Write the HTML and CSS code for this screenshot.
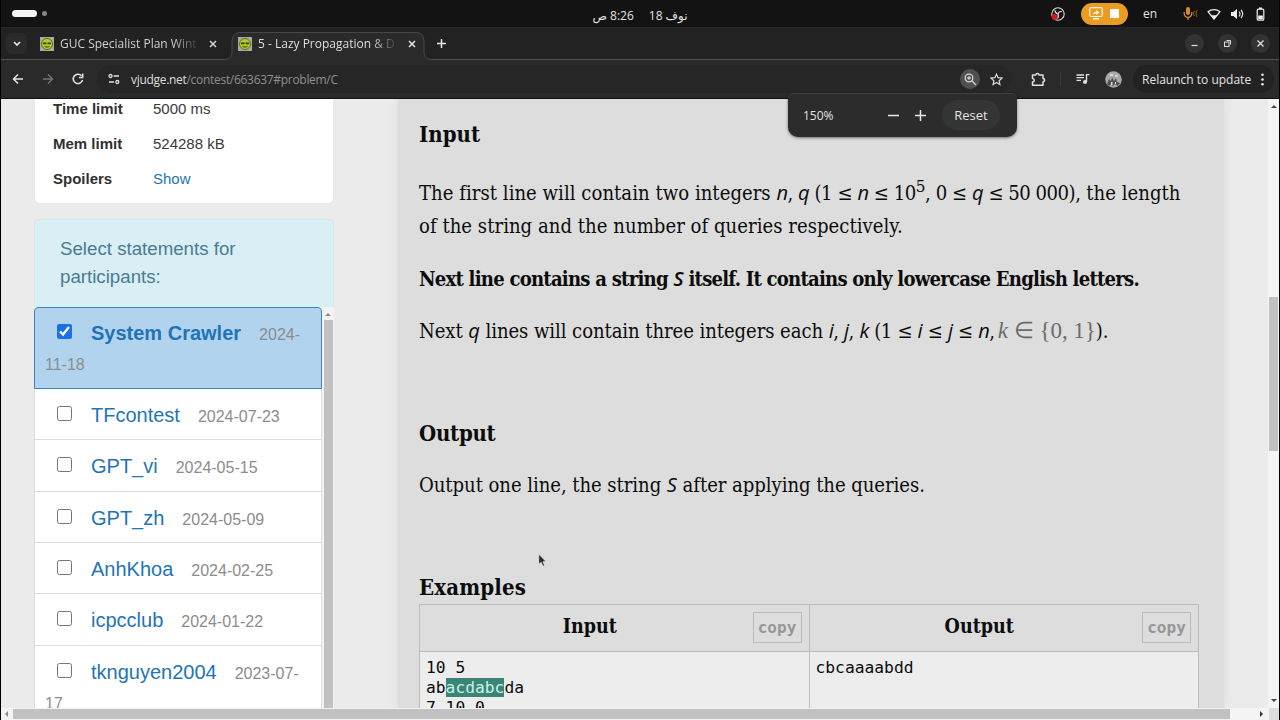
FILE: index.html
```
<!DOCTYPE html>
<html lang="en">
<head>
    <meta charset="UTF-8">
    <meta name="viewport" content="width=device-width, initial-scale=1.0">
    <title>5 - Lazy Propagation</title>
    <link rel="stylesheet" href="styles.css">
</head>
<body>
    <div class="topbar">
        <div class="workspaces"><span class="pill"></span><span class="dot"></span></div>
        <div class="clock" dir="rtl"><span>نوف 18</span><span>8:26 ص</span></div>
        <div class="tray">
            <svg class="obs" width="14" height="14" viewBox="0 0 14 14"><circle cx="7" cy="7" r="6.2" fill="#161616" stroke="#ddd" stroke-width="1.1"/><path d="M4 3.2c0 2 1 3.3 3 3.8M10.8 4.6C9 4.2 7.600 5 7 7M7 7c.8 1.800.4 3.400-1 4.500" fill="none" stroke="#ddd" stroke-width="1.2"/><circle cx="3.700" cy="10" r="2.900" fill="#d11a22"/></svg>
            <span class="cast">
                <svg width="14" height="13" viewBox="0 0 14 13"><rect x=".7" y=".7" width="12.600" height="8.800" rx="1.200" fill="none" stroke="#fff3d6" stroke-width="1.200"/><path d="M4 7.400c.3-2 1.600-2.700 3.400-2.700V3l3 2.500-3 2.400V6.400C6 6.300 5 6.500 4 7.400zM4 11h6v1.400H4z" fill="#fff"/></svg>
                <svg width="9" height="9" viewBox="0 0 9 9"><rect width="9" height="9" rx="1" fill="#fff"/></svg>
            </span>
            <span class="lang">en</span>
            <svg class="mic" width="15" height="15" viewBox="0 0 15 15" fill="none" stroke="#d78a2b"><rect x="3" y="1" width="4" height="8" rx="2" fill="#d78a2b" stroke="none"/><path d="M1.200 6v1.500a3.800 3.800 0 0 0 7.600 0V6M5 11.500V14" stroke-width="1.300"/><path d="M11.300 5c-.8 1.500-.8 3.500 0 5M14 4c-1.200 2-1.200 5 0 7" opacity=".65"/></svg>
            <svg class="wifi" width="14" height="12" viewBox="0 0 14 12"><path d="M1 3.700C4.500.8 9.500.8 13 3.700L7 11z" fill="none" stroke="#eee" stroke-width="1.300" stroke-linejoin="round"/><path d="M4.300 7.300h5.400L7 10.800z" fill="#eee"/></svg>
            <svg class="vol" width="14" height="12" viewBox="0 0 14 12"><path d="M1 4h2.300L7 1v10L3.300 8H1z" fill="#eee"/><path d="M9 3.500c1.200 1.500 1.200 3.500 0 5M11 2c2 2.400 2 5.600 0 8" fill="none" stroke="#ddd" stroke-width="1.200"/></svg>
            <svg width="9" height="14" viewBox="0 0 9 14"><path d="M3 .5h3v1.500H3z" fill="#eee"/><rect x="1.200" y="2.200" width="6.600" height="11" rx="1.300" fill="none" stroke="#eee" stroke-width="1.200"/><path d="M2.200 8.500h4.600v3.700H2.200z" fill="#eee"/></svg>
        </div>
    </div>

    <div class="tabstrip">
        <button class="tab-search"><svg width="8" height="6" viewBox="0 0 8 6"><path d="M1 1l3 3 3-3" fill="none" stroke="#e6e6e6" stroke-width="1.700"/></svg></button>
        <div class="tab">
            <svg class="favicon" width="14" height="14" viewBox="0 0 14 14"><rect width="14" height="14" fill="#a9aaa3"/><circle cx="7" cy="7" r="5.500" fill="#b5cb29" stroke="#60701d"/><path d="M3 5.500h3.500v1.700H3zM7.500 5.500H11v1.700H7.500z" fill="#36420f"/><path d="M4.500 9.300c1.500 1 3.500 1 5 0" fill="none" stroke="#36420f"/></svg>
            <span class="tab-title">GUC Specialist Plan Wint</span>
            <svg class="close" width="8" height="8" viewBox="0 0 8 8"><path d="M1 1l6 6M7 1L1 7" stroke="#d6d6d6" stroke-width="1.500"/></svg>
        </div>
        <div class="tab active">
            <svg class="tab-shape" width="208" height="28" viewBox="0 0 208 28"><path d="M0 27.500C5 27.500 8 25 8 20V10C8 4 11 .5 17 .5h174c6 0 9 3.500 9 9.500v10c0 5 3 7.500 8 7.500V28H0z" fill="#2a2a2a"/><path d="M0 27.500C5 27.500 8 25 8 20V10C8 4 11 .5 17 .5h174c6 0 9 3.500 9 9.500v10c0 5 3 7.500 8 7.500" fill="none" stroke="#484848"/></svg>
            <svg class="favicon" width="14" height="14" viewBox="0 0 14 14"><rect width="14" height="14" fill="#a9aaa3"/><circle cx="7" cy="7" r="5.500" fill="#b5cb29" stroke="#60701d"/><path d="M3 5.500h3.500v1.700H3zM7.500 5.500H11v1.700H7.500z" fill="#36420f"/><path d="M4.500 9.300c1.500 1 3.500 1 5 0" fill="none" stroke="#36420f"/></svg>
            <span class="tab-title">5 - Lazy Propagation &amp; D</span>
            <svg class="close" width="8" height="8" viewBox="0 0 8 8"><path d="M1 1l6 6M7 1L1 7" stroke="#e6e6e6" stroke-width="1.500"/></svg>
        </div>
        <svg class="new-tab" width="9" height="9" viewBox="0 0 9 9"><path d="M4.500 0v9M0 4.500h9" stroke="#e6e6e6" stroke-width="1.500"/></svg>
        <div class="window-buttons">
            <span><svg width="9" height="9" viewBox="0 0 9 9"><path d="M1.500 6.500h6" stroke="#e0e0e0" stroke-width="1.200"/></svg></span>
            <span><svg width="9" height="9" viewBox="0 0 9 9" fill="none" stroke="#e0e0e0"><rect x="1.500" y="3" width="4.500" height="4.500"/><path d="M3.500 1.500h4v4"/></svg></span>
            <span><svg width="9" height="9" viewBox="0 0 9 9"><path d="M1.500 1.500l6 6M7.500 1.500l-6 6" stroke="#e0e0e0" stroke-width="1.300"/></svg></span>
        </div>
    </div>

    <div class="toolbar">
        <div class="nav-buttons">
            <svg width="12" height="12" viewBox="0 0 12 12" fill="none" stroke="#e6e6e6" stroke-width="1.500"><path d="M11 6H1.500M6 1.500L1.500 6 6 10.500"/></svg>
            <svg width="12" height="12" viewBox="0 0 12 12" fill="none" stroke="#757575" stroke-width="1.400"><path d="M1 6h9.500M6 1.500L10.500 6 6 10.500"/></svg>
            <svg width="12" height="12" viewBox="0 0 12 12" fill="none" stroke="#e6e6e6" stroke-width="1.500"><path d="M10.500 7A4.700 4.700 0 1 1 9.500 2.800"/><path d="M10.700.5v4H7" /></svg>
        </div>
        <div class="omnibox">
            <svg class="tune" width="12" height="12" viewBox="0 0 12 12" fill="none" stroke="#dedede" stroke-width="1.300"><circle cx="2.500" cy="3" r="1.500"/><path d="M5.500 3H11M1 9h5"/><circle cx="9.300" cy="9" r="1.500"/></svg>
            <span class="url"><span class="host">vjudge.net</span>/contest/663637#problem/C</span>
            <span class="zoom-icon"><svg width="13" height="13" viewBox="0 0 13 13" fill="none" stroke="#d6d6d6" stroke-width="1.300"><circle cx="5" cy="5" r="3.800"/><path d="M7.800 7.800L12 12M3.200 5h3.600M5 3.200v3.600"/></svg></span>
            <svg class="star" width="13" height="13" viewBox="0 0 13 13"><path d="M6.500 1.200l1.600 3.500 3.900.4-2.900 2.600.8 3.800-3.400-2-3.400 2 .8-3.800L1 5.100l3.900-.4z" fill="none" stroke="#dcdcdc" stroke-width="1.200"/></svg>
        </div>
        <svg class="puzzle" width="15" height="15" viewBox="0 0 15 15"><path d="M1.500 3h3.300a1.600 1.600 0 0 1 3.200 0h4v3.500a1.600 1.600 0 0 1 0 3.200v3.500h-10.500V9.900a1.700 1.700 0 0 0 0-3.500z" fill="none" stroke="#e0e0e0" stroke-width="1.500" stroke-linejoin="round"/></svg>
        <span class="divider"></span>
        <svg class="media" width="14" height="12" viewBox="0 0 14 12"><path d="M.5 2h7.500M.5 4.700h7.500M.5 7.400h4.500" stroke="#e0e0e0" stroke-width="1.300"/><path d="M10.500 9V1.600h3" fill="none" stroke="#e0e0e0" stroke-width="1.400"/><circle cx="9" cy="9" r="2" fill="#e0e0e0"/></svg>
        <svg class="avatar" width="17" height="17" viewBox="0 0 17 17"><circle cx="8.500" cy="8.500" r="8.300" fill="#a8aaa9"/><path d="M2 13l2-5 2 2 1-4 2 4 2-3 1 4 3 1-2 3-3-2-2 2-2-2-2 2z" fill="#4e5251"/><path d="M5 3h3v2H5zM10 4h3v1.500h-3zM6 11h1.500v3H6zM10 11h1v2h-1z" fill="#dadada"/></svg>
        <div class="relaunch"><span>Relaunch to update</span><svg width="3" height="13" viewBox="0 0 3 13" fill="#e8e8e8"><circle cx="1.500" cy="1.800" r="1.300"/><circle cx="1.500" cy="6.500" r="1.300"/><circle cx="1.500" cy="11.200" r="1.300"/></svg></div>
    </div>

    <div class="viewport">
        <div class="page">
            <div class="sidebar">
                <table class="props">
                    <tr><th>Time limit</th><td>5000 ms</td></tr>
                    <tr><th>Mem limit</th><td>524288 kB</td></tr>
                    <tr><th>Spoilers</th><td><a>Show</a></td></tr>
                </table>
                <div class="statements">
                    <div class="statements-title">Select statements for participants:</div>
                    <div class="list-wrap">
                        <ul class="list">
                            <li class="selected"><input type="checkbox" checked><a>System Crawler</a><span class="date">2024-11-18</span></li>
                            <li><input type="checkbox"><a>TFcontest</a><span class="date">2024-07-23</span></li>
                            <li><input type="checkbox"><a>GPT_vi</a><span class="date">2024-05-15</span></li>
                            <li><input type="checkbox"><a>GPT_zh</a><span class="date">2024-05-09</span></li>
                            <li><input type="checkbox"><a>AnhKhoa</a><span class="date">2024-02-25</span></li>
                            <li><input type="checkbox"><a>icpcclub</a><span class="date">2024-01-22</span></li>
                            <li><input type="checkbox"><a>tknguyen2004</a><span class="date">2023-07-17</span></li>
                        </ul>
                        <div class="list-scroll">
                            <svg width="6" height="4" viewBox="0 0 6 4"><path d="M0 4l3-3 3 3z" fill="#8a8a8a"/></svg>
                            <span class="list-thumb"></span>
                        </div>
                    </div>
                </div>
            </div>

            <div class="problem">
                <h3 class="first">Input</h3>
                <p class="intro">The first line will contain two integers <span class="math bounds"><span><i>n</i>,</span><i>q</i><span>(1</span><span>≤</span><i>n</i><span>≤</span><span>10<sup>5</sup>,</span><span>0</span><span>≤</span><i>q</i><span>≤</span><span>50 000),</span></span> the length<br>of the string and the number of queries respectively.</p>
                <p class="strong">Next line contains a string <i>S</i> itself. It contains only lowercase English letters.</p>
                <p class="queries">Next <i>q</i> lines will contain three integers each <span class="math ranges"><span><i>i</i>,</span><span><i>j</i>,</span><i>k</i><span>(1</span><span>≤</span><i>i</i><span>≤</span><i>j</i><span>≤</span><span><i>n</i>,</span></span><span class="formula"><i>k</i><span>∈</span><span>{0, 1}</span></span>).</p>
                <h3 class="output">Output</h3>
                <p class="result">Output one line, the string <i>S</i> after applying the queries.</p>
                <h3 class="examples">Examples</h3>
                <table class="samples">
                    <tr>
                        <th><div class="sample-head"><span>Input</span><button>copy</button></div></th>
                        <th><div class="sample-head"><span>Output</span><button>copy</button></div></th>
                    </tr>
                    <tr>
                        <td><pre>10 5
ab<mark>acdabc</mark>da
7 10 0</pre></td>
                        <td><pre>cbcaaaabdd</pre></td>
                    </tr>
                </table>
            </div>
        </div>
        <div class="vscroll">
            <svg width="6" height="4" viewBox="0 0 6 4"><path d="M0 4l3-3 3 3z" fill="#444"/></svg>
            <span class="vthumb"></span>
            <svg class="down" width="6" height="4" viewBox="0 0 6 4"><path d="M0 0l3 3 3-3z" fill="#444"/></svg>
        </div>
    </div>
    <div class="hscroll">
        <svg width="4" height="6" viewBox="0 0 4 6"><path d="M4 0L1 3l3 3z" fill="#8a8a8a"/></svg>
        <span class="hthumb"></span>
        <svg class="right" width="4" height="6" viewBox="0 0 4 6"><path d="M0 0l3 3-3 3z" fill="#333"/></svg>
        <span class="corner"></span>
    </div>

    <div class="zoom-bubble">
        <span class="percent">150%</span>
        <svg width="11" height="11" viewBox="0 0 11 11"><path d="M0 5.500h11" stroke="#e8e8e8" stroke-width="1.500"/></svg>
        <svg width="11" height="11" viewBox="0 0 11 11"><path d="M0 5.500h11M5.500 0v11" stroke="#e8e8e8" stroke-width="1.500"/></svg>
        <button>Reset</button>
    </div>
    <svg class="cursor" width="10" height="15" viewBox="0 0 10 15"><path d="M.7 1v10.500l2.500-2.200 1.700 4 1.800-.8-1.700-3.800h3.200z" fill="#2b2b2b" stroke="#f5f5f5" stroke-width=".7"/></svg>
</body>
</html>
```
FILE: styles.css
```
* {
    box-sizing: border-box;
}

body {
    margin: 0;
    width: 1280px;
    height: 720px;
    overflow: hidden;
    display: flex;
    flex-direction: column;
    border-left: 1px solid #000;
    border-right: 1px solid #000;
    background-color: #131313;
    font-family: "Open Sans", sans-serif;
    font-size: 12px;
    color: #e2e2e2;
}

svg {
    display: block;
    flex: none;
}

button {
    border: none;
    padding: 0;
    color: inherit;
    font: inherit;
}

/* system bar */
.topbar {
    height: 27px;
    flex: none;
    display: grid;
    grid-template-columns: 1fr auto 1fr;
    align-items: center;
}

.workspaces {
    display: flex;
    align-items: center;
    gap: 5px;
    padding-left: 11px;
}

.pill {
    width: 25px;
    height: 7px;
    border-radius: 4px;
    background-color: #f4f4f4;
}

.dot {
    width: 5px;
    height: 5px;
    border-radius: 50%;
    background-color: #858585;
}

.clock {
    display: flex;
    gap: 15px;
    padding-top: 3px;
    font-family: "Open Sans", "DejaVu Sans", sans-serif;
    white-space: nowrap;
}

.tray {
    display: flex;
    justify-content: flex-end;
    align-items: center;
    padding-right: 14px;
}

.obs {
    margin-right: 16px;
}

.cast {
    display: flex;
    align-items: center;
    gap: 7px;
    width: 47px;
    height: 22px;
    padding-left: 8px;
    border-radius: 11px;
    background-color: #eb9c23;
    margin-right: 15px;
}

.lang {
    margin-right: 26px;
}

.mic {
    margin-right: 9px;
}

.wifi {
    margin-right: 9px;
}

.vol {
    margin-right: 12px;
}

/* tab strip */
.tabstrip {
    height: 33px;
    flex: none;
    display: flex;
    align-items: center;
    background-color: #222;
    border-bottom: 1px solid #505050;
    border-top: 1px solid #272727;
}

.tab-search {
    width: 21px;
    height: 21px;
    margin-left: 5px;
    border-radius: 6px;
    background-color: #2b2b2b;
    display: flex;
    align-items: center;
    justify-content: center;
}

.tab {
    position: relative;
    display: flex;
    align-items: center;
    width: 191px;
    height: 100%;
    padding-left: 13px;
    color: #d0d0d0;
}

.tab.active {
    width: 193px;
    margin-left: 13px;
    padding-left: 7px;
    color: #dedede;
}

/* the selected tab runs into the toolbar */
.tab-shape {
    position: absolute;
    left: -7px;
    top: 4px;
}

.tab .favicon,
.tab .tab-title,
.tab .close {
    position: relative;
}

.tab-title {
    width: 139px;
    margin-left: 6px;
    white-space: nowrap;
    -webkit-mask-image: linear-gradient(to right, #000 112px, transparent 140px);
    mask-image: linear-gradient(to right, #000 112px, transparent 140px);
}

.close {
    margin-left: 10px;
}

.active .close {
    margin-left: 11px;
}

.new-tab {
    margin-left: 13px;
}

.window-buttons {
    margin-left: auto;
    margin-right: 9px;
    display: flex;
    gap: 14px;
}

.window-buttons span {
    width: 19px;
    height: 19px;
    border-radius: 50%;
    background-color: #333;
    display: flex;
    align-items: center;
    justify-content: center;
}

/* toolbar */
.toolbar {
    height: 39px;
    flex: none;
    display: flex;
    align-items: center;
    background-color: #2a2a2a;
    border-bottom: 1px solid #111;
}

.nav-buttons {
    display: flex;
    gap: 18px;
    margin-left: 11px;
}

.omnibox {
    flex: none;
    width: 914px;
    height: 28px;
    margin-left: 13px;
    padding-left: 11px;
    border-radius: 14px;
    background-color: #262626;
    display: flex;
    align-items: center;
}

.url {
    margin-left: 11px;
    color: #8f8f8f;
    letter-spacing: -0.3px;
}

.host {
    color: #dedede;
}

.zoom-icon {
    width: 20px;
    height: 20px;
    margin-left: auto;
    border-radius: 50%;
    background-color: #505050;
    display: flex;
    align-items: center;
    justify-content: center;
}

.star {
    margin: 0 8px 0 10px;
}

.puzzle {
    margin-left: 20px;
}

.divider {
    width: 1px;
    height: 14px;
    margin-left: 14px;
    background-color: #393939;
}

.media {
    margin-left: 15px;
}

.avatar {
    margin-left: 15px;
}

.relaunch {
    flex: 1;
    height: 28px;
    margin: 0 5px 0 11px;
    padding: 0 10px 0 9px;
    border-radius: 14px;
    background-color: #222;
    display: flex;
    align-items: center;
    justify-content: space-between;
    white-space: nowrap;
}

/* web page */
.viewport {
    flex: 1;
    min-height: 0;
    display: flex;
    overflow: hidden;
    background-color: #ebebeb;
}

.page {
    flex: 1;
    display: flex;
}

.sidebar {
    width: 300px;
    margin-left: 33px;
    flex: none;
    font-family: "Liberation Sans", Arial, sans-serif;
    color: #3a3a3a;
}

.sidebar a {
    color: #1f74b5;
}

.props {
    width: 298px;
    height: 104px;
    margin-left: 1px;
    padding: 0 16px 7px;
    border-spacing: 0;
    border-radius: 0 0 5px 5px;
    background-color: #fff;
    font-size: 15px;
    text-align: left;
    line-height: 17px;
    display: block;
}

.props th,
.props td {
    padding: 1px 2px 17px;
}

.props th {
    width: 100px;
    color: #303030;
}

.statements {
    margin-top: 16px;
}

.statements-title {
    height: 88px;
    padding: 15px 60px 0 25px;
    border: 1px solid #cbe8ef;
    border-bottom: none;
    border-radius: 4px 4px 0 0;
    background-color: #d9eef5;
    color: #4a7b92;
    font-size: 18.7px;
    line-height: 28px;
}

.list-wrap {
    display: flex;
    background-color: #fff;
}

.list {
    width: 288px;
    margin: 0;
    padding: 0;
    list-style: none;
    font-size: 20px;
    line-height: 30px;
}

.list li {
    height: 51.350px;
    padding: 11px 8px 0 10px;
    border: 1px solid #ddd;
    border-width: 0 1px 1px;
}

.list li.selected {
    height: 82px;
    padding-top: 10px;
    border: 1px solid #3d84bd;
    border-radius: 4px 4px 0 0;
    background-color: #b2d3ee;
    font-weight: bold;
}

.list li:last-child {
    height: 90px;
}

.list input {
    width: 15px;
    height: 15px;
    margin: 0 19px 0 12px;
    vertical-align: 1px;
    accent-color: #1a70e6;
}

.date {
    margin-left: 18px;
    color: #8c8c8c;
    font-size: 16px;
    font-weight: normal;
    line-height: 1;
}

.list-scroll {
    flex: 1;
    display: flex;
    flex-direction: column;
    align-items: center;
    gap: 4px;
    padding: 5px 0 0;
    background-color: #f3f3f3;
}

.list-thumb {
    flex: 1;
    width: 9px;
    background-color: #c1c1c1;
}

.problem {
    width: 826px;
    margin-left: 64px;
    padding: 19px 24px 0 21px;
    background-color: #ddd;
    box-shadow: 0 0 8px 1px #ddd;
    color: #0c0c0c;
    font-family: "DejaVu Serif Condensed", "DejaVu Serif", serif;
    font-size: 20.100px;
    line-height: 33px;
    white-space: nowrap;
}

.problem h3 {
    margin: 0;
    font-size: 22px;
    line-height: 33px;
}

.problem p {
    margin: 20px 0 0;
}

.problem p.intro {
    margin-top: 26px;
    letter-spacing: 0.03px;
}

.problem p.queries {
    margin-top: 19px;
    letter-spacing: -0.08px;
}

.problem h3.output {
    margin-top: 69px;
    letter-spacing: -0.3px;
}

.problem p.result {
    margin-top: 19px;
    letter-spacing: -0.06px;
}

.problem h3.examples {
    margin-top: 69px;
    letter-spacing: 0.15px;
}

.problem i {
    font-family: "Open Sans", sans-serif;
    line-height: 1;
}

.problem .strong {
    font-weight: bold;
    letter-spacing: -0.770px;
}

.strong i {
    font-weight: 600;
}

.math {
    display: inline-flex;
    justify-content: space-between;
    align-items: baseline;
    letter-spacing: -0.5px;
}

.bounds {
    width: 304px;
}

.ranges {
    width: 166px;
}

.math sup {
    font-size: 17px;
    line-height: 0;
    vertical-align: 8px;
}

.formula {
    display: inline-flex;
    justify-content: space-between;
    width: 98px;
    margin-left: 3px;
    height: 24px;
    line-height: 24px;
    color: #6b6b6b;
    font-family: "Liberation Serif", serif;
    font-size: 23px;
}

.problem .formula i {
    font-family: "Liberation Serif", serif;
    line-height: inherit;
}

.samples {
    width: 780px;
    border-collapse: collapse;
    table-layout: fixed;
}

.samples th,
.samples td {
    padding: 0;
    border: 1px solid #bcbcbc;
}

.samples th {
    height: 47px;
    font-size: 19.500px;
}

.sample-head {
    display: grid;
    grid-template-columns: 1fr auto;
    align-items: center;
    padding: 0 7px 0 0;
}

.sample-head span {
    padding-left: 7px;
    line-height: 30px;
    margin-top: -2px;
}

.sample-head button {
    width: 49px;
    height: 31px;
    margin-top: -1px;
    border: 1px solid #bbb;
    background: none;
    color: #969696;
    font: bold 16px "DejaVu Sans Mono", monospace;
}

.samples td {
    height: 80px;
    padding: 6px;
    background-color: #ededed;
    vertical-align: top;
}

.samples pre {
    margin: 0;
    font: 16.300px/20px "DejaVu Sans Mono", monospace;
}

.samples mark {
    background-color: #3b8577;
    color: #c8f3e4;
}

/* scrollbars */
.vscroll {
    width: 11px;
    flex: none;
    display: flex;
    flex-direction: column;
    align-items: center;
    padding: 5px 0;
    background-color: #f4f4f4;
}

.vthumb {
    width: 9px;
    height: 154px;
    margin-top: 189px;
    background-color: #c1c1c1;
}

.down {
    margin-top: auto;
}

.hscroll {
    height: 12px;
    flex: none;
    display: flex;
    align-items: center;
    padding-left: 3px;
    background-color: #f4f4f4;
}

.hthumb {
    width: 1217px;
    height: 10px;
    margin-left: 5px;
    background-color: #c1c1c1;
}

.right {
    margin-left: auto;
    margin-right: 5px;
}

.corner {
    width: 10px;
    height: 100%;
    background-color: #ddd;
}

/* zoom popup */
.zoom-bubble {
    position: absolute;
    left: 788px;
    top: 93px;
    width: 229px;
    height: 44px;
    padding: 0 0 1px 15px;
    border-top: 1px solid #424242;
    border-radius: 6px 6px 10px 10px;
    background-color: #2c2c2c;
    box-shadow: 0 1px 3px rgba(0, 0, 0, 0.5);
    display: flex;
    align-items: center;
}

.percent {
    width: 85px;
}

.zoom-bubble svg + svg {
    margin-left: 16px;
}

.zoom-bubble button {
    width: 58px;
    height: 30px;
    margin-left: 16px;
    border-radius: 15px;
    background-color: #353535;
    font-size: 13px;
}

.cursor {
    position: absolute;
    left: 538px;
    top: 553px;
}
```
